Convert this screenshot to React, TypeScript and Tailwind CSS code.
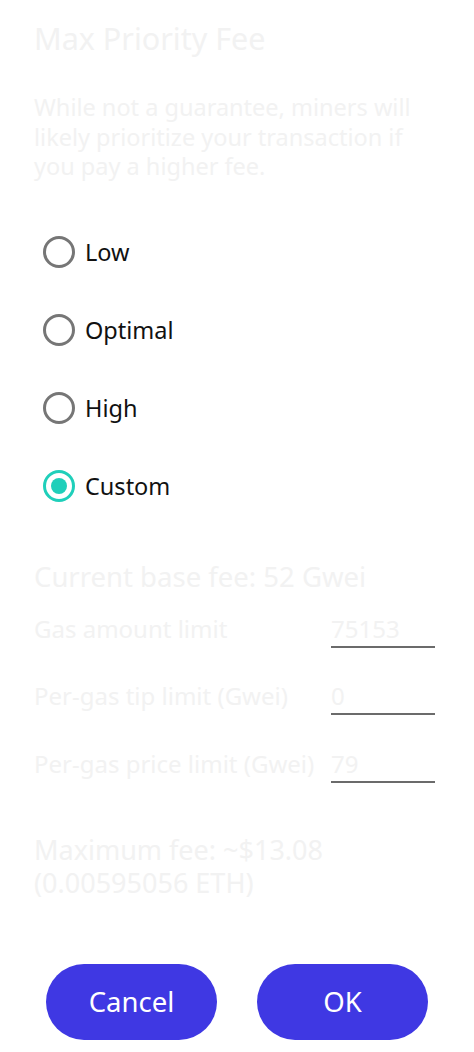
import { useState } from "react";

const options = ["Low", "Optimal", "High", "Custom"];

const fields = [
  { label: "Gas amount limit", value: "75153" },
  { label: "Per-gas tip limit (Gwei)", value: "0" },
  { label: "Per-gas price limit (Gwei)", value: "79" },
];

export default function App() {
  const [selected, setSelected] = useState("Custom");

  return (
    <div className="w-[474px] h-[1052px] bg-white overflow-hidden font-['Noto_Sans',sans-serif]">
      <div className="pl-[34px] pr-[30px]">
        <h1 className="pt-[18px] text-[30.5px] leading-[40px] text-[#f2f2f2]">Max Priority Fee</h1>
        <p className="mt-[35px] text-[23.5px] leading-[29.5px] text-[#f2f2f2]">
          While not a guarantee, miners will likely prioritize your transaction if you pay a higher fee.
        </p>
      </div>

      {/* Options */}
      <div className="mt-[31px] pl-[43px]">
        {options.map((o) => {
          const on = o === selected;
          return (
            <button key={o} onClick={() => setSelected(o)} className="flex items-center gap-[10px] h-[78px]">
              <span
                className={
                  "w-[32px] h-[32px] rounded-full border-[3px] flex items-center justify-center " +
                  (on ? "border-[#1fcfba]" : "border-[#767676]")
                }
              >
                {on && <span className="w-[16px] h-[16px] rounded-full bg-[#1fcfba]" />}
              </span>
              <span className="text-[23.5px] leading-[30px] text-[#111]">{o}</span>
            </button>
          );
        })}
      </div>

      <div className="pl-[34px] pr-[39px]">
        <p className="mt-[35px] text-[27.5px] leading-[34px] text-[#f2f2f2]">Current base fee: 52 Gwei</p>

        <div className="mt-[18px] flex flex-col gap-[31.5px]">
          {fields.map((f) => (
            <div key={f.label} className="grid grid-cols-[297px_104px]">
              <span className="text-[24px] leading-[34px] text-[#f2f2f2] whitespace-nowrap">{f.label}</span>
              <span className="text-[24px] leading-[34px] text-[#f2f2f2] border-b-2 border-[#6b6b6b]">{f.value}</span>
            </div>
          ))}
        </div>

        <p className="mt-[50px] text-[27px] leading-[33px] text-[#f2f2f2]">
          Maximum fee: ~$13.08
          <br />
          (0.00595056 ETH)
        </p>
      </div>

      <div className="mt-[65px] flex justify-center gap-[40px]">
        <button className="w-[171px] h-[76px] rounded-full bg-[#3f38e3] text-white text-[27.5px]">Cancel</button>
        <button className="w-[171px] h-[76px] rounded-full bg-[#3f38e3] text-white text-[27.5px]">OK</button>
      </div>
    </div>
  );
}
